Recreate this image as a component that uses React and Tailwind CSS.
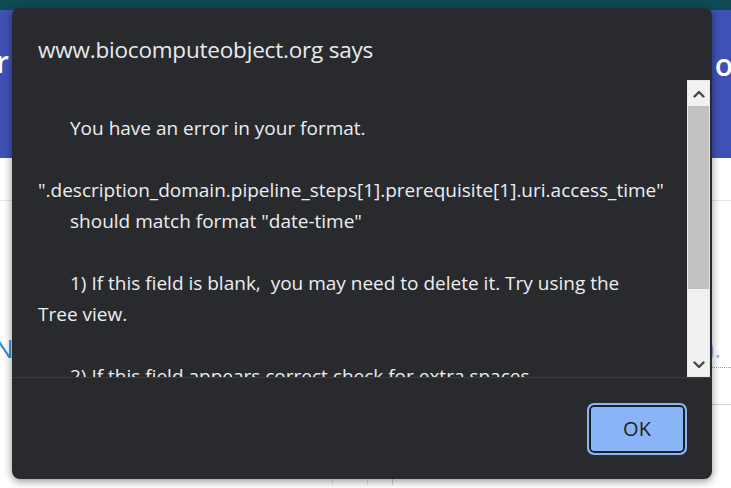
import React from 'react';

const font = { fontFamily: '"Open Sans", "Noto Sans", sans-serif' };

function Chevron({ up }) {
  return (
    <svg width="12" height="8" viewBox="0 0 12 8" fill="none">
      <path
        d={up ? 'M1.5 6.5 L6 2 L10.5 6.5' : 'M1.5 1.5 L6 6 L10.5 1.5'}
        stroke="#484848"
        strokeWidth="2.4"
        strokeLinecap="round"
        strokeLinejoin="round"
      />
    </svg>
  );
}

function Scrollbar() {
  return (
    <div className="flex w-[23px] shrink-0 flex-col border border-[#e6e6e6] bg-[#f1f1f1]">
      <div className="flex h-[25px] items-center justify-center">
        <Chevron up />
      </div>
      <div className="h-[183px] bg-[#c1c1c1]" />
      <div className="flex-1" />
      <div className="flex h-[23px] items-center justify-center">
        <Chevron />
      </div>
    </div>
  );
}

export default function App() {
  return (
    <div className="relative h-[488px] w-[731px] overflow-hidden bg-white" style={font}>
      {/* page behind the alert */}
      <div className="h-[10px] bg-[#0e4b55]" />
      <div className="flex h-[148px] items-start justify-between bg-[#3f51b5] pt-[37px] text-[30px] font-semibold leading-none text-white">
        <span className="-ml-[4px]">r</span>
        <span className="-mr-[2px] mt-[3px]">o</span>
      </div>
      <div className="mt-[42px] h-px bg-[#e4e4e4]" />
      <div className="mt-[134px] flex items-center justify-between text-[26px] leading-none">
        <span className="-ml-[6px] text-[#2f8fd8]">N</span>
        <span className="mr-[10px] text-[#9fb8e8]">).</span>
      </div>
      <div className="ml-auto mt-[6px] w-[30px] border-t border-dotted border-[#999]" />
      <div className="ml-auto mt-[36px] h-px w-[30px] bg-[#d0d0d0]" />
      <div className="ml-[332px] mt-[70px] flex h-[10px] gap-[34px]">
        <div className="w-px bg-[#e2e2e2]" />
        <div className="w-px bg-[#e2e2e2]" />
        <div className="ml-[-10px] w-px bg-[#cfcfcf]" />
      </div>

      {/* alert dialog */}
      <div className="absolute left-[12px] top-[8px] flex h-[471px] w-[700px] flex-col rounded-[8px] bg-[#292a2d] shadow-[0_2px_8px_rgba(0,0,0,0.45)]">
        <div className="h-[72px] whitespace-nowrap pl-[26px] pt-[28px] text-[22.5px] leading-[28px] tracking-[-0.2px] text-[#e8eaed]">
          www.biocomputeobject.org says
        </div>
        <div className="flex h-[298px] border-b border-[#3c3d41] pr-[2px]">
          <div className="flex-1 overflow-hidden whitespace-nowrap pl-[26px] pt-[33px] text-[19px] leading-[31px] text-[#eceef1]">
            <p className="pl-[32px]">You have an error in your format.</p>
            <p className="mt-[31px]">".description_domain.pipeline_steps[1].prerequisite[1].uri.access_time"</p>
            <p className="pl-[32px]">should match format "date-time"</p>
            <p className="mt-[31px] pl-[32px]">1) If this field is blank,&nbsp; you may need to delete it. Try using the</p>
            <p>Tree view.</p>
            <p className="mt-[31px] pl-[32px]">2) If this field appears correct check for extra spaces.</p>
          </div>
          <Scrollbar />
        </div>
        <div className="flex flex-1 items-start justify-end pr-[25px] pt-[25px]">
          <button className="h-[52px] w-[100px] rounded-[7px] border-[2px] border-[#8ab4f8] bg-[#8ab4f8] p-0 text-[20px] text-[#202124] shadow-[inset_0_0_0_2px_#202124]">
            OK
          </button>
        </div>
      </div>
    </div>
  );
}
